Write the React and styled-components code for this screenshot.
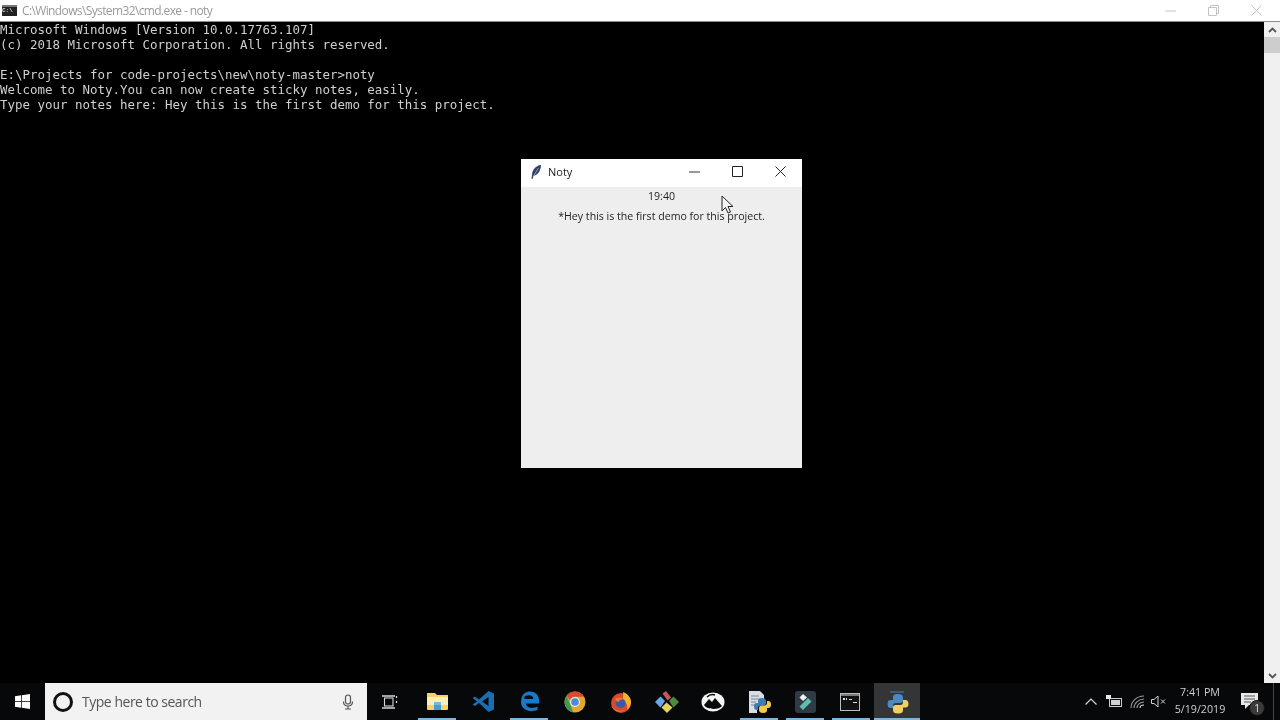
import React from "react";
import styled, { createGlobalStyle } from "styled-components";

const Global = createGlobalStyle`
  html, body { margin: 0; padding: 0; background: #000; }
  body { width: 1280px; height: 720px; overflow: hidden; }
`;

const Screen = styled.div`
  position: relative;
  width: 1280px;
  height: 720px;
  display: flex;
  flex-direction: column;
  background: #000;
  filter: blur(0.45px);
`;

const CmdTitle = styled.div`
  height: 21px;
  flex: none;
  display: flex;
  align-items: center;
  padding-right: 2px;
  background: #fff;
  border-bottom: 1px solid #8c8c8c;
  font: 12px "Open Sans", "Liberation Sans", sans-serif;
  color: #9a9a9a;
`;

const CmdIcon = styled.span`
  width: 15px;
  height: 11px;
  margin: 0 5px 0 2px;
  background: #222;
  border-top: 2px solid #777;
  box-sizing: border-box;
  color: #ddd;
  font: bold 6px/8px "Liberation Mono", monospace;
  overflow: hidden;
`;

const CmdTitleText = styled.span`
  flex: 1;
  letter-spacing: -0.62px;
`;

const CaptionBtn = styled.span`
  width: 43px;
  height: 21px;
  display: flex;
  align-items: center;
  justify-content: center;
`;

const CmdBody = styled.div`
  flex: 1;
  display: flex;
  min-height: 0;
`;

const Console = styled.pre`
  flex: 1;
  margin: 0;
  font: 12.46px/15px "DejaVu Sans Mono", "Liberation Mono", monospace;
  color: #cfcfcf;
`;

const Scrollbar = styled.div`
  width: 16px;
  flex: none;
  background: #f0f0f0;
  display: flex;
  flex-direction: column;
  align-items: center;
`;

const ScrollArrow = styled.div`
  height: 15px;
  width: 16px;
  display: flex;
  align-items: center;
  justify-content: center;
`;

const ScrollThumb = styled.div`
  width: 16px;
  height: 16px;
  background: #cdcdcd;
`;

const ScrollRest = styled.div`
  flex: 1;
`;

const NotyWindow = styled.div`
  position: absolute;
  left: 521px;
  top: 159px;
  width: 281px;
  height: 309px;
  background: #eeeeee;
  display: flex;
  flex-direction: column;
  align-items: center;
  font: 10.6px "Open Sans", "Liberation Sans", sans-serif;
  color: #222;
`;

const NotyTitle = styled.div`
  width: 100%;
  height: 28px;
  flex: none;
  background: #fff;
  display: flex;
  align-items: center;
  font-size: 11px;
  padding: 0 0 3px 7px;
  box-sizing: border-box;
`;

const NotyName = styled.span`
  flex: 1;
  margin-left: 4px;
`;

const NotyBtn = styled.span`
  width: 43px;
  display: flex;
  justify-content: center;
`;

const NotyTime = styled.div`
  margin-top: 2px;
  line-height: 14px;
`;

const NotyText = styled.div`
  margin-top: 6px;
  line-height: 14px;
`;

const Pointer = styled.svg`
  position: absolute;
  left: 721px;
  top: 195px;
`;

const Taskbar = styled.div`
  height: 37px;
  flex: none;
  display: flex;
  align-items: stretch;
  background: #070809;
`;

const StartBtn = styled.div`
  width: 45px;
  display: flex;
  align-items: center;
  justify-content: center;
`;

const SearchBox = styled.div`
  width: 322px;
  display: flex;
  align-items: center;
  background: #f2f2f2;
  box-sizing: border-box;
  padding: 0 13px 0 8px;
  font: 14px "Open Sans", "Liberation Sans", sans-serif;
  color: #555;
`;

const Cortana = styled.span`
  width: 14px;
  height: 14px;
  border: 3px solid #111;
  border-radius: 50%;
  margin-right: 9px;
`;

const SearchLabel = styled.span`
  flex: 1;
  letter-spacing: -0.48px;
`;

const TaskCell = styled.div`
  position: relative;
  width: ${(p) => p.$w || 46}px;
  flex: none;
  box-sizing: border-box;
  padding: ${(p) => p.$pad || 0};
  display: flex;
  align-items: center;
  justify-content: center;
  background: ${(p) => (p.$active ? "#333537" : "transparent")};

  &::after {
    content: "";
    display: ${(p) => (p.$running ? "block" : "none")};
    position: absolute;
    left: ${(p) => (p.$active ? 0 : 4)}px;
    right: ${(p) => (p.$active ? 0 : 4)}px;
    bottom: 0;
    height: 2px;
    background: #7fb4dc;
  }
`;

const Tray = styled.div`
  flex: 1;
  display: flex;
  align-items: center;
  justify-content: flex-end;
  color: #cfcfcf;
`;

const TrayIcon = styled.span`
  width: ${(p) => p.$w}px;
  display: flex;
  justify-content: center;
`;

const Clock = styled.div`
  width: 54px;
  margin: -2px 0 0 6px;
  text-align: center;
  font: 10.7px/17px "Open Sans", "Liberation Sans", sans-serif;
  color: #cfcfcf;
`;

const Notify = styled.span`
  position: relative;
  width: 46px;
  display: flex;
  justify-content: center;
`;

const NotifyBadge = styled.span`
  position: absolute;
  left: 22px;
  top: 7px;
  width: 16px;
  height: 16px;
  border-radius: 50%;
  background: #3a3a3a;
  border: 1px solid #111;
  box-sizing: border-box;
  text-align: center;
  font: 10px/14px "Open Sans", "Liberation Sans", sans-serif;
  color: #e4e4e4;
`;

const ShowDesktop = styled.span`
  width: 7px;
  height: 100%;
  border-left: 1px solid #444;
  box-sizing: border-box;
`;

const Quill = ({ size = 16 }) => (
  <svg width={size} height={size} viewBox="0 0 16 16">
    <path d="M13 1C8 1.500 4.500 5.500 4 10.500L3.500 15l1.300-.2.500-2.800C9.500 11.500 13 6.500 13 1z" fill="#2f4268" />
    <path d="M5.500 12 10.500 4" stroke="#b9c6e0" strokeWidth=".7" fill="none" />
  </svg>
);

const WinLogo = () => (
  <svg width="15" height="15" viewBox="0 0 16 16" fill="#fff">
    <path d="M0 2.300 6.600 1.400v6.200H0zM7.400 1.300 16 0v7.600H7.400zM0 8.400h6.600v6.200L0 13.700zM7.400 8.400H16V16l-8.600-1.300z" />
  </svg>
);

const Mic = () => (
  <svg width="12" height="16" viewBox="0 0 12 16" fill="none" stroke="#555" strokeWidth="1.200">
    <rect x="3.500" y="1" width="5" height="9" rx="2.500" />
    <path d="M1.500 7.500c0 6 9 6 9 0M6 12.500V15M3 15h6" />
  </svg>
);

const TaskView = () => (
  <svg width="16" height="14" viewBox="0 0 16 14" fill="none" stroke="#d8d8d8" strokeWidth="1.100">
    <rect x="2.500" y="3" width="8.500" height="8" />
    <path d="M0 1h13M0 13h13M14.500 1v2M14.500 6v2" strokeWidth="1.300" />
  </svg>
);

const Explorer = () => (
  <svg width="21" height="19" viewBox="0 0 21 19">
    <path d="M0 1h8l2 2h11v14a1 1 0 0 1-1 1H1a1 1 0 0 1-1-1z" fill="#f4d36c" />
    <path d="M0 5h21v8H0z" fill="#fbeeb4" />
    <path d="M7 10h7v3H7z" fill="#6dbbe6" />
    <path d="M7 13h7v5H7z" fill="#4a9bd0" />
  </svg>
);

const VSCode = () => (
  <svg width="23" height="23" viewBox="0 0 23 23">
    <path d="M16.500 1 22 3.500v16L16.500 22 7 13l-4 3-2.500-1.500L5 11.500.5 8 3 6.500l4 3z" fill="#1a6fb2" />
    <path d="M16.500 7 10 11.500l6.500 4.500z" fill="#070809" />
  </svg>
);

const Edge = () => (
  <svg width="21" height="21" viewBox="0 0 21 21" fill="none">
    <path d="M20 12.500H7c0 4 5.500 6 11.500 3v3.500C11 22 2 19 2 11 2 6.500 5 3.500 8 2 5.500 5 5.500 6.500 5.300 8h9c0-4-6-5.500-12-.5C3.500 3 7 .5 11 .5c6 0 10 4.500 9 12z" fill="#1878c9" />
  </svg>
);

const Chrome = () => (
  <svg width="22" height="22" viewBox="0 0 22 22">
    <circle cx="11" cy="11" r="10.500" fill="#e0a82e" />
    <path d="M11 .5a10.500 10.500 0 0 1 9.100 5.250H11A5.300 5.300 0 0 0 6 9L2.500 4.800A10.500 10.500 0 0 1 11 .5z" fill="#d8483b" />
    <path d="M2.500 4.800 6.300 13.500l3 7.900A10.500 10.500 0 0 1 2.500 4.800z" fill="#3c9a53" />
    <circle cx="11" cy="11" r="5" fill="#e8e8e8" />
    <circle cx="11" cy="11" r="3.800" fill="#4a8ad8" />
  </svg>
);

const Firefox = () => (
  <svg width="22" height="22" viewBox="0 0 22 22">
    <circle cx="11" cy="12" r="10" fill="#d9492e" />
    <path d="M13 1c5 2 8.500 6 8 11-.5 3-2 5-4 7 1-4 0-8-4-9-1-3 1-6 0-9z" fill="#f2b32b" />
    <circle cx="10.500" cy="12" r="5" fill="#3a5aa8" />
    <path d="M5 8c3-2 7-2 9 1-3-1-5 0-5 2-2 0-3-1-4-3z" fill="#e8792c" />
    <path d="M1.500 15c3 5 10 6 14 3-3 4-11 4-14-3z" fill="#e8792c" />
  </svg>
);

const GitApp = () => (
  <svg width="24" height="24" viewBox="0 0 24 24">
    <path d="M0 12l5.500-5.500L10 11 5.500 17.500z" fill="#6aa7e8" />
    <path d="M12 23l-5.500-5.500 5-5 6 5z" fill="#e6d35f" />
    <path d="M14 11l4.500-4.500L24 12l-5.500 5.500z" fill="#4f8a3e" />
    <path d="M7.500 3.500 11 1l5 6.500-3.500 3z" fill="#c9575a" />
  </svg>
);

const Inkscape = () => (
  <svg width="24" height="20" viewBox="0 0 24 20">
    <ellipse cx="12" cy="10" rx="11.500" ry="9.500" fill="#f5f5f5" />
    <path d="M3 13l5-6 3 3 3-4 7 8c-3 4-15 4-18-1z" fill="#070809" />
    <path d="M6 5c2-2 5-3 8-2" stroke="#070809" strokeWidth="1.500" fill="none" />
  </svg>
);

const PyDoc = () => (
  <svg width="23" height="24" viewBox="0 0 23 24">
    <path d="M1 1h11l4 4v10H9v8H1z" fill="#d9dde6" />
    <path d="M3 6h8M3 9h8M3 12h5M3 15h4" stroke="#7e8694" strokeWidth="1" />
    <path d="M14 8c-3 0-4 1-4 3v2h-1c-2 0-3 1-3 3.500S7 20 9 20h1v-2c0-1.500 1-2.500 2.500-2.500h3c1.500 0 2.500-1 2.500-2.500v-2c0-2-1.500-3-4-3z" fill="#3f7cb0" />
    <path d="M15 23c3 0 4-1 4-3v-2h1c2 0 3-1 3-3.500S22 11 20 11h-1v2c0 1.500-1 2.500-2.500 2.500h-3c-1.500 0-2.500 1-2.500 2.500v2c0 2 1.500 3 4 3z" fill="#f2c94f" />
  </svg>
);

const Sublime = () => (
  <svg width="21" height="22" viewBox="0 0 21 22">
    <rect width="21" height="22" rx="3" fill="#2f3a46" />
    <path d="M8 3l4 3.500-4 3.500-3.500-3.500z" fill="#f2f2f2" />
    <path d="M13 7l3.500 3.500L8 19l-3.500-3.500z" fill="#5cbdb0" />
  </svg>
);

const Terminal = () => (
  <svg width="20" height="18" viewBox="0 0 20 18">
    <rect x=".5" y=".5" width="19" height="17" fill="#111" stroke="#bdbdbd" />
    <path d="M1 1h18v2H1z" fill="#7a7a7a" />
    <path d="M3 5h2v2H3zM6 5h1v2H6zM9 6h3v1H9zM13 9h4v1h-4z" fill="#e0e0e0" />
  </svg>
);

const Python = () => (
  <svg width="22" height="24" viewBox="0 0 22 24">
    <path d="M3 1h14v2H3z" fill="#3c5a78" />
    <path d="M11 4C7 4 6 5.500 6 7.500V10H3.500C1.500 10 .5 11.500.5 14s1 4 3 4H6v-2.500c0-1.500 1-2.500 2.500-2.500h5c1.500 0 2.500-1 2.500-2.500v-3C16 5 14.500 4 11 4z" fill="#4a8ac0" />
    <path d="M11 23.500c4 0 5-1.500 5-3.500v-2.500h2.500c2 0 3-1.500 3-3.500s-1-4-3-4H16v2.500c0 1.500-1 2.500-2.500 2.500h-5C7 15 6 16 6 17.500V20c0 2.500 1.500 3.500 5 3.500z" fill="#f2cf62" />
  </svg>
);

const Battery = () => (
  <svg width="16" height="13" viewBox="0 0 16 13">
    <rect x="3.500" y="3.500" width="12" height="8" fill="none" stroke="#d0d0d0" />
    <rect x="5" y="5" width="9" height="5" fill="#d0d0d0" />
    <rect x="0" y="0" width="5" height="4" fill="#e8e8e8" />
  </svg>
);

const Wifi = () => (
  <svg width="15" height="14" viewBox="0 0 15 14" fill="none" stroke="#9a9a9a" strokeWidth="1.100">
    <path d="M1 13C1 6 7 1 14 1M4 13c0-5 5-9 10-9M7 13c0-3 3-6 7-6" />
    <path d="M10 13c0-2 2-3 4-3" stroke="#d8d8d8" />
  </svg>
);

const Volume = () => (
  <svg width="15" height="13" viewBox="0 0 15 13" fill="none" stroke="#d0d0d0" strokeWidth="1">
    <path d="M.5 4.500h2.500L7 1v11L3 8.500H.5z" />
    <path d="M10 4.500l4 4M14 4.500l-4 4" />
  </svg>
);

const Chevron = () => (
  <svg width="12" height="7" viewBox="0 0 12 7" fill="none" stroke="#d8d8d8" strokeWidth="1.200">
    <path d="M.5 6.500 6 1l5.500 5.500" />
  </svg>
);

const NoteBubble = () => (
  <svg width="18" height="17" viewBox="0 0 18 17">
    <path d="M0 0h17v12H8l-4 4v-4H0z" fill="#e8e8e8" />
    <path d="M3 3h11M3 6h11M3 9h7" stroke="#555" strokeWidth="1" />
  </svg>
);

const lines = [
  "Microsoft Windows [Version 10.0.17763.107]",
  "(c) 2018 Microsoft Corporation. All rights reserved.",
  "",
  "E:\\Projects for code-projects\\new\\noty-master>noty",
  "Welcome to Noty.You can now create sticky notes, easily.",
  "Type your notes here: Hey this is the first demo for this project.",
].join("\n");

const tasks = [
  { id: "explorer", icon: <Explorer />, running: true },
  { id: "vscode", icon: <VSCode /> },
  { id: "edge", icon: <Edge />, running: true },
  { id: "chrome", icon: <Chrome /> },
  { id: "firefox", icon: <Firefox /> },
  { id: "git", icon: <GitApp /> },
  { id: "inkscape", icon: <Inkscape /> },
  { id: "pydoc", icon: <PyDoc />, running: true },
  { id: "sublime", icon: <Sublime />, running: true },
  { id: "terminal", icon: <Terminal />, running: true, pad: "0 2px 0 0" },
  { id: "python", icon: <Python />, running: true, active: true, pad: "0 0 0 2px" },
];

export default function App() {
  return (
    <Screen>
      <Global />
      <CmdTitle>
        <CmdIcon>C:\</CmdIcon>
        <CmdTitleText>C:\Windows\System32\cmd.exe - noty</CmdTitleText>
        <CaptionBtn>
          <svg width="11" height="2"><path d="M0 1h11" stroke="#c4c4c4" /></svg>
        </CaptionBtn>
        <CaptionBtn>
          <svg width="11" height="11" fill="none" stroke="#c4c4c4"><path d="M.5 2.500h8v8h-8zM2.500 2.500v-2h8v8h-2" /></svg>
        </CaptionBtn>
        <CaptionBtn>
          <svg width="11" height="11" stroke="#c4c4c4"><path d="M.5.500l10 10M10.500.500l-10 10" /></svg>
        </CaptionBtn>
      </CmdTitle>
      <CmdBody>
        <Console>{lines}</Console>
        <Scrollbar>
          <ScrollArrow>
            <svg width="9" height="6" fill="none" stroke="#555" strokeWidth="1.800"><path d="M1 5l3.500-3.500L8 5" /></svg>
          </ScrollArrow>
          <ScrollThumb />
          <ScrollRest />
          <ScrollArrow>
            <svg width="9" height="6" fill="none" stroke="#555" strokeWidth="1.800"><path d="M1 1l3.500 3.500L8 1" /></svg>
          </ScrollArrow>
        </Scrollbar>
      </CmdBody>
      <Taskbar>
        <StartBtn><WinLogo /></StartBtn>
        <SearchBox>
          <Cortana />
          <SearchLabel>Type here to search</SearchLabel>
          <Mic />
        </SearchBox>
        <TaskCell $w={47} $pad="0 2px 0 0"><TaskView /></TaskCell>
        {tasks.map((t) => (
          <TaskCell key={t.id} $running={t.running} $active={t.active} $pad={t.pad}>{t.icon}</TaskCell>
        ))}
        <Tray>
          <TrayIcon $w={24}><Chevron /></TrayIcon>
          <TrayIcon $w={22}><Battery /></TrayIcon>
          <TrayIcon $w={24}><Wifi /></TrayIcon>
          <TrayIcon $w={18}><Volume /></TrayIcon>
          <Clock>7:41 PM<br />5/19/2019</Clock>
          <Notify>
            <NoteBubble />
            <NotifyBadge>1</NotifyBadge>
          </Notify>
          <ShowDesktop />
        </Tray>
      </Taskbar>
      <NotyWindow>
        <NotyTitle>
          <Quill />
          <NotyName>Noty</NotyName>
          <NotyBtn>
            <svg width="11" height="2"><path d="M0 1h11" stroke="#333" /></svg>
          </NotyBtn>
          <NotyBtn>
            <svg width="11" height="11" fill="none" stroke="#222"><path d="M.5.500h10v10H.5z" /></svg>
          </NotyBtn>
          <NotyBtn>
            <svg width="11" height="11" stroke="#222"><path d="M.5.500l10 10M10.500.500l-10 10" /></svg>
          </NotyBtn>
        </NotyTitle>
        <NotyTime>19:40</NotyTime>
        <NotyText>*Hey this is the first demo for this project.</NotyText>
      </NotyWindow>
      <Pointer width="13" height="19" viewBox="0 0 13 19">
        <path d="M1 1v15l3.500-3.500 2.500 5.500 2.500-1-2.500-5.500H12z" fill="#f4f4f4" stroke="#222" strokeWidth="1" />
      </Pointer>
    </Screen>
  );
}
